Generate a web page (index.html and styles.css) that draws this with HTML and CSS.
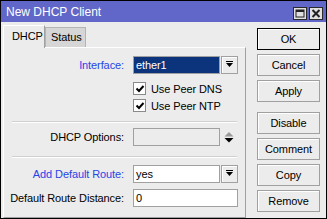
FILE: index.html
```html
<!DOCTYPE html>
<html lang="en">
<head>
    <meta charset="UTF-8">
    <title>New DHCP Client</title>
    <link rel="stylesheet" href="styles.css">
</head>
<body>
    <div class="window">
        <div class="titlebar">
            <span class="title">New DHCP Client</span>
            <div class="title-btns">
                <span class="tbtn">
                    <svg width="10" height="9" viewBox="0 0 10 9"><rect x="1" y="1" width="8" height="7" fill="none" stroke="#222" stroke-width="1"/><rect x="1" y="1" width="8" height="2" fill="#222"/></svg>
                </span>
                <span class="tbtn">
                    <svg width="10" height="9" viewBox="0 0 10 9"><path d="M1.5 1 L8.5 8 M8.5 1 L1.5 8" stroke="#222" stroke-width="2"/></svg>
                </span>
            </div>
        </div>

        <div class="main">
            <div class="left">
                <div class="tabs">
                    <div class="tab active">DHCP</div>
                    <div class="tab">Status</div>
                </div>
                <div class="panel">
                    <div class="row">
                        <span class="label blue">Interface:</span>
                        <span class="field selected">ether1</span>
                        <span class="dd">
                            <svg width="9" height="8" viewBox="0 0 9 8"><rect x="1" y="0" width="7" height="1" fill="#000"/><path d="M1 2 H8 L4.5 6 Z" fill="#000"/></svg>
                        </span>
                    </div>
                    <div class="check-row dns">
                        <span class="checkbox">
                            <svg width="10" height="10" viewBox="0 0 10 10"><path d="M1.5 4.5 L4 7 L8.5 2" fill="none" stroke="#000" stroke-width="2"/></svg>
                        </span>
                        <span>Use Peer DNS</span>
                    </div>
                    <div class="check-row ntp">
                        <span class="checkbox">
                            <svg width="10" height="10" viewBox="0 0 10 10"><path d="M1.5 4.5 L4 7 L8.5 2" fill="none" stroke="#000" stroke-width="2"/></svg>
                        </span>
                        <span>Use Peer NTP</span>
                    </div>
                    <div class="separator top-sep"></div>
                    <div class="row">
                        <span class="label">DHCP Options:</span>
                        <span class="field disabled"></span>
                        <span class="spinner">
                            <svg width="10" height="11" viewBox="0 0 10 11"><path d="M0.5 4.5 H9.5 L5 0 Z" fill="#9a9a9a"/><path d="M0.5 6 H9.5 L5 10.5 Z" fill="#000"/></svg>
                        </span>
                    </div>
                    <div class="separator route-sep"></div>
                    <div class="row">
                        <span class="label blue">Add Default Route:</span>
                        <span class="field">yes</span>
                        <span class="dd">
                            <svg width="9" height="8" viewBox="0 0 9 8"><rect x="1" y="0" width="7" height="1" fill="#000"/><path d="M1 2 H8 L4.5 6 Z" fill="#000"/></svg>
                        </span>
                    </div>
                    <div class="row last">
                        <span class="label">Default Route Distance:</span>
                        <span class="field wide">0</span>
                    </div>
                </div>
            </div>

            <div class="buttons">
                <div class="btn default">OK</div>
                <div class="btn">Cancel</div>
                <div class="btn">Apply</div>
                <div class="btn spaced">Disable</div>
                <div class="btn">Comment</div>
                <div class="btn">Copy</div>
                <div class="btn">Remove</div>
            </div>
        </div>
    </div>
</body>
</html>
```

FILE: styles.css
```css
* {
    box-sizing: border-box;
}

body {
    margin: 0;
    font-family: "Liberation Sans", Arial, sans-serif;
    font-size: 11px;
    letter-spacing: -0.1px;
    color: #000000;
    background-color: #ffffff;
}

.window {
    width: 327px;
    height: 219px;
    border: 1px solid #000000;
    background-color: #ececec;
    display: flex;
    flex-direction: column;
    overflow: hidden;
}

.titlebar {
    height: 21px;
    flex: none;
    background-color: #6067c8;
    display: flex;
    align-items: center;
    padding: 0 3px 0 5px;
}

.title {
    flex: 1;
    color: #ffffff;
    font-size: 12px;
    letter-spacing: 0;
}

.title-btns {
    display: flex;
    gap: 2px;
    margin-top: 3px;
}

.tbtn {
    width: 14px;
    height: 13px;
    background-color: #e0e0e0;
    border: 1px solid #2a2a2a;
    display: flex;
    align-items: center;
    justify-content: center;
}

.main {
    flex: 1;
    display: flex;
    padding: 3px 0 0 2px;
}

.left {
    width: 243px;
    display: flex;
    flex-direction: column;
}

.tabs {
    display: flex;
    align-items: flex-end;
    height: 22px;
}

.tab {
    width: 41px;
    height: 20px;
    padding-left: 5px;
    line-height: 18px;
    background-color: #d6d6d6;
    border: 1px solid #b4b4b4;
    border-bottom: none;
}

.tab.active {
    width: 42px;
    height: 23px;
    padding-left: 8px;
    line-height: 20px;
    margin-bottom: -1px;
    background-color: #ececec;
    border-color: #ffffff #a0a0a0 transparent #ffffff;
    position: relative;
    z-index: 1;
}

.panel {
    flex: 1;
    border: 1px solid;
    border-color: #ffffff #a0a0a0 #a0a0a0 #ffffff;
    padding-top: 8px;
}

.row {
    display: flex;
    align-items: center;
    height: 18px;
}

.row.last {
    margin-top: 6px;
}

.label {
    width: 120px;
    margin-right: 9px;
    text-align: right;
    white-space: nowrap;
}

.blue {
    color: #2744e6;
}

.field {
    width: 87px;
    height: 18px;
    padding-left: 2px;
    line-height: 16px;
    background-color: #ffffff;
    border: 1px solid #a0a0a0;
}

.field.wide {
    width: 105px;
}

.field.selected {
    background-color: #0b347c;
    color: #ffffff;
}

.field.disabled {
    background-color: #ececec;
}

.dd {
    width: 17px;
    height: 18px;
    margin-left: 1px;
    border: 1px solid #a0a0a0;
    box-shadow: inset 1px 1px #ffffff;
    display: flex;
    align-items: center;
    justify-content: center;
}

.spinner {
    margin-left: 4px;
    display: flex;
}

.check-row {
    display: flex;
    align-items: center;
    height: 13px;
    padding-left: 129px;
}

.check-row.dns {
    margin-top: 8px;
}

.check-row.ntp {
    margin-top: 4px;
}

.checkbox {
    width: 13px;
    height: 13px;
    margin-right: 5px;
    background-color: #ffffff;
    border: 1px solid #8a8a8a;
    display: flex;
    align-items: center;
    justify-content: center;
}

.separator {
    height: 2px;
    margin: 0 8px;
    border-top: 1px solid #d0d0d0;
    border-bottom: 1px solid #ffffff;
}

.top-sep {
    margin-top: 9px;
    margin-bottom: 5px;
}

.route-sep {
    margin-top: 10px;
    margin-bottom: 7px;
}

.buttons {
    width: 63px;
    margin: 3px 0 0 11px;
    display: flex;
    flex-direction: column;
    gap: 4px;
}

.btn {
    height: 22px;
    line-height: 20px;
    text-align: center;
    background-color: #ececec;
    border: 1px solid #a0a0a0;
    box-shadow: inset 1px 1px #ffffff;
}

.btn.default {
    border-color: #000000;
}

.btn.spaced {
    margin-top: 6px;
}
```
